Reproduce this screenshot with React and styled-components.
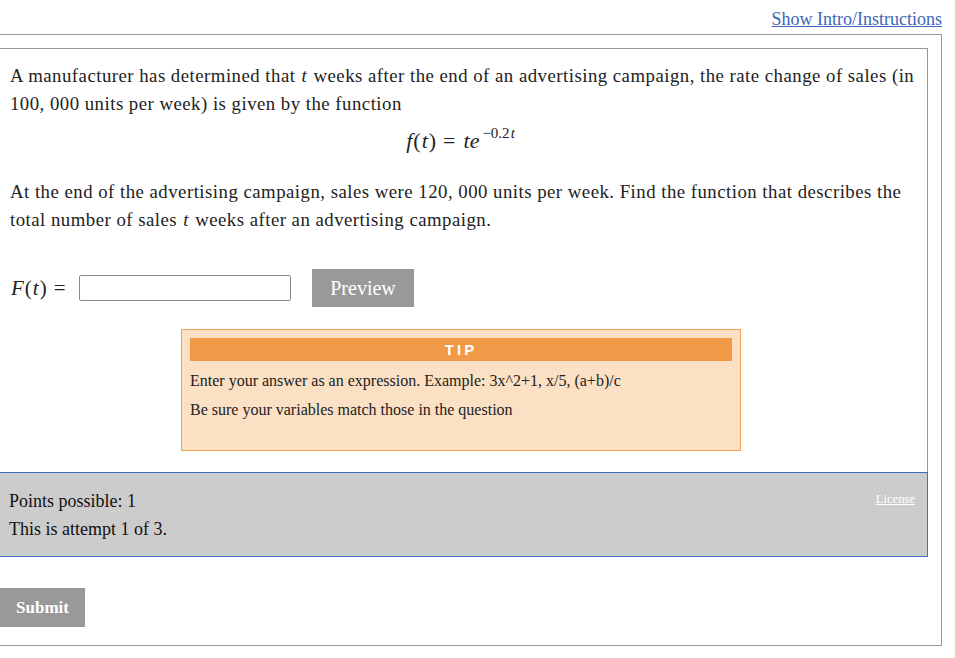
import styled, { createGlobalStyle } from 'styled-components'

const GlobalStyle = createGlobalStyle`
  body {
    margin: 0;
    background: #fff;
    font-family: "Liberation Serif", "Times New Roman", serif;
    color: #222;
  }
`

const Page = styled.div`
  width: 942px;
`

const TopBar = styled.div`
  height: 34px;
  display: flex;
  justify-content: flex-end;
  align-items: flex-start;
`

const IntroLink = styled.a`
  margin-top: 9px;
  font-size: 18px;
  color: #3d66b8;
  text-decoration: underline;
  cursor: pointer;
`

const Outer = styled.div`
  border: 1px solid #999;
  border-left: none;
  padding: 13px 13px 18px 0;
`

const Question = styled.div`
  border: 1px solid #999;
  border-left: none;
  border-bottom: none;
  padding: 13px 10px 21px 10px;
`

const Para = styled.p`
  margin: 0;
  font-size: 18.8px;
  line-height: 28px;
  letter-spacing: 0.48px;
  color: #222;
`

const MathI = styled.i`
  font-family: "Liberation Serif", serif;
  font-style: italic;
  padding: 0 1px;
`

const Rel = styled.span`
  margin: 0 7px;
`

const DisplayMath = styled.div`
  text-align: center;
  font-size: 22px;
  line-height: 30px;
  margin: 0 0 22px;
  padding-right: 6px;
  color: #222;
`

const Sup = styled.sup`
  font-size: 15px;
  vertical-align: 10px;
  margin-left: 2px;
`

const AnswerRow = styled.div`
  display: flex;
  align-items: center;
  margin-top: 35px;
`

const AnswerLabel = styled.span`
  font-size: 21px;
  width: 69px;
  color: #222;
`

const AnswerInput = styled.input`
  box-sizing: border-box;
  width: 212px;
  height: 26px;
  border: 1px solid #8a8a8a;
  border-radius: 2px;
  margin: 0;
`

const GrayButton = styled.button`
  background: #999;
  color: #fff;
  border: none;
  font-family: "Liberation Serif", serif;
  font-size: ${p => p.size || 18}px;
  font-weight: ${p => (p.bold ? 700 : 400)};
  width: ${p => p.w}px;
  height: ${p => p.h}px;
  padding: 0;
  cursor: pointer;
`

const PreviewButton = styled(GrayButton)`
  margin-left: 21px;
`

const TipBox = styled.div`
  width: 560px;
  box-sizing: border-box;
  margin: 22px 0 0 171px;
  background: #fbe0c3;
  border: 1px solid #f0a050;
  padding: 8px 8px 26px;
`

const TipHeader = styled.div`
  background: #f09a48;
  color: #fff;
  height: 23px;
  line-height: 23px;
  text-align: center;
  font-family: "Liberation Sans", Arial, sans-serif;
  font-weight: 700;
  font-size: 15px;
  letter-spacing: 3px;
`

const TipLine = styled.p`
  margin: 0;
  font-size: 16px;
  line-height: 29px;
  color: #222;
  &:first-of-type {
    margin-top: 5px;
  }
`

const Footer = styled.div`
  background: #cccccc;
  border: 1px solid #3f6fc4;
  border-left: none;
  padding: 14px 12px 13px 9px;
  display: flex;
  justify-content: space-between;
  align-items: flex-start;
`

const FooterLine = styled.div`
  font-size: 18px;
  line-height: 28px;
  color: #111;
`

const LicenseLink = styled.a`
  margin-top: 5px;
  font-size: 12.6px;
  color: #fff;
  text-decoration: underline;
`

const SubmitWrap = styled.div`
  margin-top: 31px;
`

export default function App() {
  return (
    <Page>
      <GlobalStyle />
      <TopBar>
        <IntroLink>Show Intro/Instructions</IntroLink>
      </TopBar>
      <Outer>
        <Question>
          <Para>
            A manufacturer has determined that <MathI>t</MathI> weeks after the end of an advertising campaign,
            the rate change of sales (in 100,&nbsp;000 units per week) is given by the function
          </Para>
          <DisplayMath>
            <MathI>f</MathI>(<MathI>t</MathI>)<Rel>=</Rel><MathI>te</MathI>
            <Sup>−0.2<MathI>t</MathI></Sup>
          </DisplayMath>
          <Para>
            At the end of the advertising campaign, sales were 120,&nbsp;000 units per week. Find the function
            that describes the total number of sales <MathI>t</MathI> weeks after an advertising campaign.
          </Para>
          <AnswerRow>
            <AnswerLabel>
              <MathI>F</MathI>(<MathI>t</MathI>)<Rel>=</Rel>
            </AnswerLabel>
            <AnswerInput type="text" />
            <PreviewButton w={102} h={38} size={20}>Preview</PreviewButton>
          </AnswerRow>
          <TipBox>
            <TipHeader>TIP</TipHeader>
            <TipLine>Enter your answer as an expression. Example: 3x^2+1, x/5, (a+b)/c</TipLine>
            <TipLine>Be sure your variables match those in the question</TipLine>
          </TipBox>
        </Question>
        <Footer>
          <div>
            <FooterLine>Points possible: 1</FooterLine>
            <FooterLine>This is attempt 1 of 3.</FooterLine>
          </div>
          <LicenseLink>License</LicenseLink>
        </Footer>
        <SubmitWrap>
          <GrayButton w={85} h={39} size={17} bold>Submit</GrayButton>
        </SubmitWrap>
      </Outer>
    </Page>
  )
}
